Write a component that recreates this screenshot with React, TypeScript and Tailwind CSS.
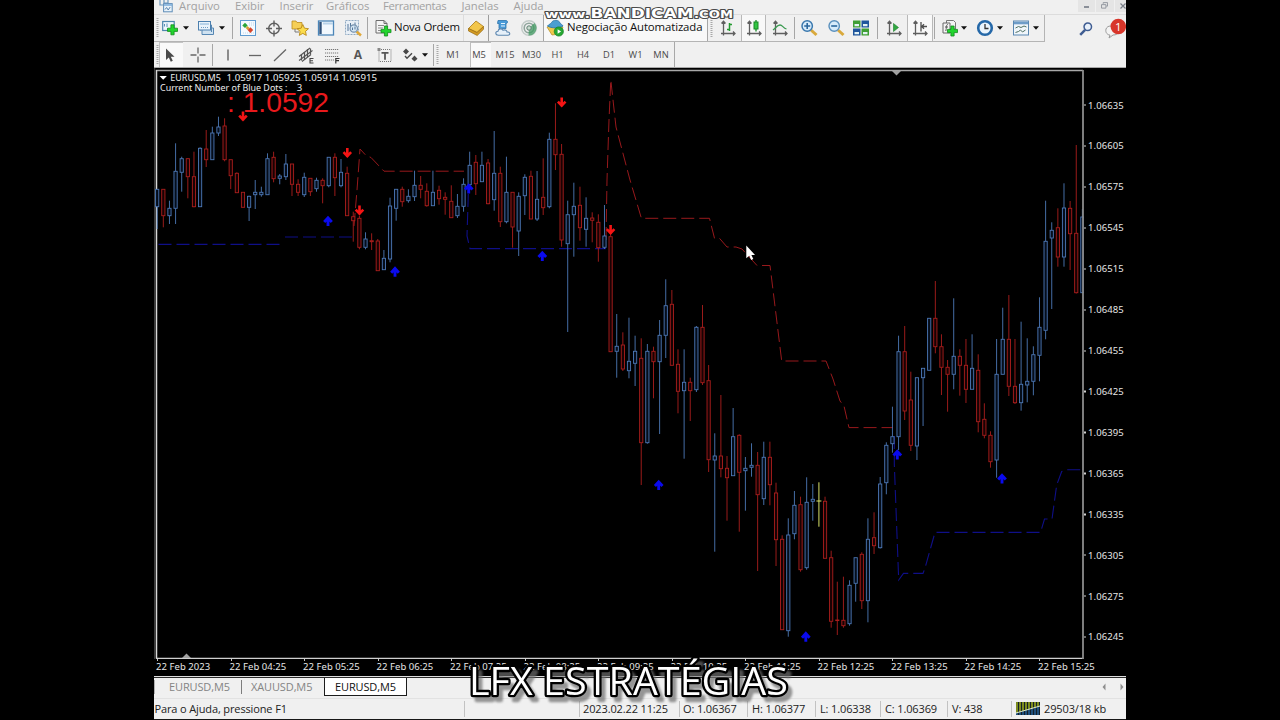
import type { ReactNode } from 'react';

type Candle = [kind: 'b' | 'r' | 'y', high: number, top: number, bottom: number, low: number];

const candles: Candle[] = [
  ['b', 189, 189.3, 206.7, 229], ['r', 189, 189.3, 215.7, 227.3], ['b', 200.7, 208.3, 215.7, 224],
  ['b', 143.3, 171.3, 208.3, 224], ['b', 156.7, 158.7, 172.3, 191.7], ['r', 158, 158.7, 176.7, 198.3],
  ['r', 151.7, 176.7, 206.7, 207.3], ['b', 147.3, 148.3, 206.7, 206.7], ['r', 130, 149, 159.7, 167],
  ['b', 126.7, 133, 159.7, 159.7], ['b', 116.7, 127, 133, 136], ['r', 118.3, 126, 159.7, 161.3],
  ['r', 159.7, 159.7, 175.7, 189], ['r', 172.3, 173.3, 192.7, 192.7], ['r', 192.3, 192.3, 207.3, 207.3],
  ['b', 195.7, 196.3, 207.3, 221], ['b', 180, 192.3, 194.7, 209], ['b', 186.7, 192.3, 194.7, 196.7],
  ['b', 153.3, 158.7, 194.7, 194.7], ['r', 151.7, 157.3, 178.7, 182.3], ['b', 174, 176, 178.3, 184.3],
  ['b', 154, 164, 176.7, 180], ['r', 164, 164, 184.3, 196], ['r', 179.3, 184.3, 192.3, 196],
  ['b', 172.7, 177.3, 194.7, 197], ['r', 178.3, 178.3, 191.7, 196], ['b', 177.7, 180.3, 188.7, 191.7],
  ['r', 178.3, 180.3, 185.7, 203.3], ['b', 157.3, 157.3, 185.7, 187.3], ['r', 153.3, 157.3, 177.7, 196],
  ['b', 159, 172.3, 185.7, 187.3], ['r', 166.7, 173.3, 215.7, 215.7], ['r', 211.7, 216.7, 220.7, 241.7],
  ['r', 215.7, 218.3, 247.3, 249.3], ['b', 232.3, 239, 247.3, 249.3], ['r', 233.3, 240.7, 241.7, 250],
  ['r', 239, 241, 270.7, 270.7], ['b', 250, 258.3, 269.7, 269.7], ['b', 197.7, 206, 259, 262.3],
  ['b', 189.3, 189.3, 208.3, 220.7], ['r', 186.7, 189.3, 201.7, 206.7], ['b', 189.3, 196.3, 200.7, 202.7],
  ['b', 170.7, 185.3, 196.7, 201], ['r', 176, 185.3, 189.3, 198.3], ['r', 183.3, 191.3, 205.7, 206.7],
  ['b', 170.7, 192.3, 205.7, 205.7], ['r', 185.7, 190.3, 198.7, 204.7], ['r', 192.3, 197.3, 199.3, 214.7],
  ['r', 185.3, 201.3, 217.7, 217.7], ['b', 194, 206.3, 215.7, 218], ['b', 178.3, 184.3, 206.3, 211.7],
  ['b', 151.7, 165.3, 184.7, 190], ['r', 155, 162.3, 183.7, 195], ['b', 151.7, 165.3, 181.7, 181.7],
  ['r', 159, 163, 203.7, 204.3], ['b', 131, 173.3, 199.7, 210.7], ['r', 166.7, 173.3, 221.7, 227],
  ['b', 156.7, 192.3, 221.7, 223.3], ['r', 192.3, 192.3, 227, 247.7], ['b', 192.3, 196.3, 231, 256],
  ['b', 174.3, 177.3, 195.7, 215], ['r', 170.7, 176.3, 219, 219], ['b', 171, 199.3, 219, 221],
  ['r', 158.3, 197.3, 207.7, 215], ['b', 132.7, 139.3, 206.7, 208.3], ['r', 103.3, 139.3, 154.7, 170],
  ['r', 144, 154.3, 240, 246.7], ['b', 200.7, 214.7, 243.7, 332], ['b', 182.7, 206.3, 214.7, 256.7],
  ['r', 186.7, 205.3, 227.7, 240.7], ['b', 197.3, 218.3, 229.3, 246.7], ['r', 212.3, 218, 220.3, 242.3],
  ['r', 214.3, 222.3, 247.7, 261.7], ['b', 205, 236, 247.3, 249], ['r', 230, 236.7, 351.7, 351.7],
  ['b', 314, 346.3, 351.3, 377.7], ['r', 332.3, 345, 369, 371], ['b', 317.7, 361.3, 370.7, 378.3],
  ['b', 335.7, 351.3, 363.3, 386], ['r', 338.3, 358.3, 442.7, 485], ['b', 344, 351.3, 442.7, 443.7],
  ['r', 346.7, 351.3, 361.7, 398.3], ['b', 320, 335.3, 361.7, 434], ['b', 279.3, 305.7, 335.3, 358],
  ['r', 290, 304.3, 365.3, 365.3], ['r', 349.3, 364.3, 391.3, 413.3], ['b', 349.3, 382.3, 390.7, 458.7],
  ['r', 377.7, 382.3, 390.7, 421], ['b', 326, 327.3, 389.7, 392], ['r', 305, 327.3, 382.7, 385],
  ['r', 365, 380.7, 459.7, 472], ['b', 433.3, 456, 460, 551.7], ['r', 395, 456, 468.7, 477.3],
  ['r', 456, 468.3, 477.7, 520.7], ['b', 408, 436.7, 475.7, 475.7], ['r', 434.3, 435.3, 472.3, 531.7],
  ['b', 457, 468.3, 470.7, 510.7], ['b', 443.3, 465.3, 467.3, 476.7], ['r', 452, 465.3, 494.7, 571],
  ['b', 441.7, 457.3, 498.7, 505], ['r', 441.7, 457.3, 484.7, 505.3], ['r', 482.7, 493, 539.7, 566],
  ['r', 535.3, 539.3, 629.7, 629.7], ['b', 518.3, 535, 630.7, 636.7], ['b', 491, 505.3, 533.7, 539.3],
  ['r', 496.7, 504.7, 569.7, 571.7], ['b', 477.3, 502.3, 567.7, 569.7], ['b', 484, 499.3, 501.3, 520.7],
  ['y', 482.3, 501, 501, 526.7], ['r', 496.7, 501.3, 558.3, 558.3], ['r', 550.7, 557.7, 621.3, 627.7],
  ['r', 581.7, 620, 620.6, 635], ['r', 576.7, 620.3, 625.7, 627.7], ['b', 580.3, 585.3, 623.7, 625.7],
  ['b', 557.7, 557.7, 583.3, 601.7], ['r', 552.3, 554.3, 600.7, 609], ['b', 518.3, 539.3, 600.7, 622.3],
  ['r', 512.3, 537.7, 545.7, 554], ['b', 477, 484, 547.7, 548.5], ['b', 442.3, 445.3, 482.7, 494.3],
  ['b', 406.7, 436.7, 443.7, 452.7], ['b', 335.7, 351.7, 436.7, 450], ['r', 326, 351.7, 411, 420],
  ['r', 371.7, 400, 445.3, 451], ['b', 377.7, 377.7, 446, 460], ['b', 368.3, 368.3, 377.7, 426],
  ['b', 318.3, 318.3, 370.3, 370.3], ['r', 281, 318.3, 346.7, 353.3], ['r', 334.3, 346.7, 367.3, 395],
  ['r', 360, 367.3, 374.3, 411.7], ['b', 298.3, 356.3, 374.3, 389.3], ['r', 349.3, 356.3, 365.3, 395.7],
  ['r', 339, 365.3, 389.3, 403], ['b', 334.3, 368.3, 389.3, 389.3], ['r', 354.3, 370.3, 421.7, 432.3],
  ['r', 403.3, 419.3, 435.3, 438.3], ['r', 431.3, 435.3, 461.7, 467.7], ['b', 339, 374.3, 460, 477.7],
  ['b', 307.7, 339.3, 374.3, 374.3], ['r', 295, 339.3, 386.3, 396], ['r', 339, 386.3, 402.7, 404],
  ['b', 321.7, 384.3, 402.7, 410.7], ['b', 338.3, 381.3, 385, 402.3], ['b', 346.3, 354.7, 381.3, 395.3],
  ['b', 297.3, 327.3, 355.3, 381.3], ['b', 200.7, 241.3, 330.3, 339.3], ['b', 222.3, 230.3, 238, 309],
  ['r', 208.3, 227.7, 257, 266.7], ['b', 183.3, 208, 257, 266.7], ['r', 201, 208.3, 233.7, 270],
  ['r', 145, 233.3, 292.7, 293.5], ['b', 209, 217, 292.7, 292.7],
];

const strokes = { b: '#4d79b8', r: '#ac1e1d', y: '#d9e36a' };
const fills = { b: '#050d1a', r: '#180203', y: 'none' };

const downArrows = [[243, 116.5], [347.3, 153], [359.5, 210.5], [561.7, 102.5], [610.6, 230]];
const upArrows = [[328, 221], [395, 271.7], [468.7, 188.5], [542.3, 256], [658.7, 485], [805.8, 636.7], [897.3, 454.5], [1002, 478.5]];

const redStops = [
  'M354 226 L357 190 L360 149 L366 155.5 L371 157.5 L384 171.2 H464',
  'M606 240 L607 180 L609 120 L610.8 80 L616 127 L630 180 L641.4 218.3 H709.5 L714.5 238.3 H719.5 L727 247 H736 L742 249 L757 265.5 H770 L781.7 361 H826 L833 379 L840 401 L844 406 L849 427.6 H893',
];
const blueStops = [
  'M158.5 244.4 H281',
  'M285 237 H353',
  'M468.3 194 L467 236 L470 248.6 H606',
  'M894.3 436 V464 L898.7 580 L903.5 573.4 H923 L925 568 L935 532.4 H1040.5 L1044.5 519 H1052 L1056.7 485 L1061.7 471.5 L1067 469.7 H1083',
];

const prices = ['1.06635', '1.06605', '1.06575', '1.06545', '1.06515', '1.06485', '1.06455', '1.06425', '1.06395', '1.06365', '1.06335', '1.06305', '1.06275', '1.06245'];
const times = ['22 Feb 2023', '22 Feb 04:25', '22 Feb 05:25', '22 Feb 06:25', '22 Feb 07:25', '22 Feb 08:25', '22 Feb 09:25', '22 Feb 10:25', '22 Feb 11:25', '22 Feb 12:25', '22 Feb 13:25', '22 Feb 14:25', '22 Feb 15:25'];

const CHART_FONT = "'Noto Sans','Open Sans',sans-serif";

function Chart() {
  return (
    <svg className="block h-[591px] w-[930px] shrink-0" viewBox="154 68 930 591">
      <path d="M154.7 68V659" stroke="#4a4a4a" strokeWidth="1" />
      <path d="M156.5 659V70.5H1083" fill="none" stroke="#a8a8a8" strokeWidth="1.3" />
      <path d="M156.5 70V658" stroke="#d8d8d8" strokeWidth="1.3" />
      <path d="M156 658.3H1083.5" stroke="#cfcfcf" strokeWidth="1.2" />
      {redStops.map((d) => (
        <path key={d} d={d} fill="none" stroke="#98191c" strokeWidth="1" strokeDasharray="13 5" />
      ))}
      {blueStops.map((d) => (
        <path key={d} d={d} fill="none" stroke="#0f0f88" strokeWidth="1.1" strokeDasharray="13 5" />
      ))}
      {candles.map(([kind, high, top, bottom, low], i) => {
        const x = 157.2 + i * 6.127;
        const h = Math.max(bottom - top, 0.4);
        return (
          <g key={i} stroke={strokes[kind]} strokeWidth={kind === 'y' ? 1 : 0.9}>
            <path d={`M${x} ${high}V${top}M${x} ${bottom}V${low}`} />
            {kind === 'y' ? (
              <path d={`M${x - 2.5} ${top}h5`} />
            ) : (
              <rect x={x - 1.6} y={top} width="3.2" height={h} fill={fills[kind]} />
            )}
          </g>
        );
      })}
      {downArrows.map(([x, y]) => (
        <path key={x} d={`M${x} ${y - 5}V${y + 4}M${x - 3.8} ${y - 0.8}L${x} ${y + 3.2}L${x + 3.8} ${y - 0.8}`} fill="none" stroke="#f51414" strokeWidth="2.6" />
      ))}
      {upArrows.map(([x, y]) => (
        <path key={x} d={`M${x} ${y + 5}V${y - 3}M${x - 3.8} ${y + 1}L${x} ${y - 3.2}L${x + 3.8} ${y + 1}`} fill="none" stroke="#0a0aee" strokeWidth="2.9" />
      ))}
      <path d="M1083 70V659" stroke="#8c8c8c" strokeWidth="1.8" />
      <path d="M892 71h9l-4.5 4.5z" fill="#a0a0a0" />
      <path d="M182 658h9l-4.5-4.5z" fill="#a0a0a0" />
      <text x="227" y="111.6" fontFamily="'Liberation Sans',sans-serif" fontSize="28.5" fill="#e8191c" textLength="102" lengthAdjust="spacingAndGlyphs">: 1.0592</text>
      <path d="M159.5 76h7.4l-3.7 3.8z" fill="#fff" />
      <g fill="#ececec" fontFamily={CHART_FONT} fontSize="9.6">
        <text x="170.3" y="81" textLength="50.5" lengthAdjust="spacingAndGlyphs">EURUSD,M5</text>
        <text x="226.6" y="81" textLength="150.5" lengthAdjust="spacingAndGlyphs">1.05917 1.05925 1.05914 1.05915</text>
        <text x="160" y="91.2" textLength="127.5" lengthAdjust="spacingAndGlyphs">Current Number of Blue Dots :</text>
        <text x="296.8" y="91.2">3</text>
      </g>
      <path d="M746.3 245.5V258.3L749.2 255.7L751.2 260L753.3 259L751.4 254.900H755z" fill="#fff" />
    </svg>
  );
}

function Cell({ className, children }: { className: string; children?: ReactNode }) {
  return <div className={`flex h-full shrink-0 items-center justify-center ${className}`}>{children}</div>;
}

function Pic({ children, className = 'h-[18px] w-[18px]' }: { children: ReactNode; className?: string }) {
  return (
    <svg viewBox="0 0 18 18" className={`shrink-0 ${className}`} fill="none">
      {children}
    </svg>
  );
}

function Caret({ className }: { className: string }) {
  return (
    <Cell className={className}>
      <svg viewBox="0 0 6 4" className="h-[4px] w-[6px]"><path d="M0 0.3h6L3 3.7z" fill="#111" /></svg>
    </Cell>
  );
}

function Sep({ className }: { className: string }) {
  return <div className={`h-[22px] w-px shrink-0 bg-[#a6a6a6] ${className}`} />;
}

function Grip() {
  return (
    <Cell className="w-[6px]">
      <svg viewBox="0 0 3 20" className="h-[20px] w-[3px]"><path d="M1.5 0V20" stroke="#a8a8a8" strokeWidth="2" strokeDasharray="1 1" /></svg>
    </Cell>
  );
}

const Plus = ({ x, y }: { x: number; y: number }) => (
  <path d={`M${x - 1.6} ${y - 5}h3.2v3.4h3.4v3.2h-3.4v3.4h-3.2v-3.4h-3.4v-3.2h3.4z`} fill="#22d52e" stroke="#128a1c" strokeWidth="0.8" />
);

const Axes = () => (
  <path d="M4.500 2.500V14.500H16M2.500 4.500L4.500 2.200l2 2.300M14 12.500l2 2-2 2M2 14.500h2.500v2" stroke="#5f5f5f" strokeWidth="1.300" />
);

function MenuBar() {
  return (
    <div className="flex h-[15px] shrink-0 overflow-hidden border-b border-[#dcdcdc] text-[11.3px] leading-[11px] text-[#a2a2a2]">
      <div className="w-[25px] shrink-0 pl-[5px]">
        <svg viewBox="0 0 14 13" className="h-[13px] w-[14px]" fill="none">
          <path d="M1 0V5H5M5 0V3H9V0" stroke="#6b97bd" strokeWidth="1.2" />
          <rect x="4.6" y="3.6" width="8.6" height="8.2" fill="#e8f2fa" stroke="#5f8db8" />
          <path d="M5 5h8" stroke="#7fb0dc" strokeWidth="1.6" />
          <path d="M6 9.5l1.6-2 1.6 2.5 2-3" stroke="#5c86b0" />
        </svg>
      </div>
      <div className="w-[56px] shrink-0">Arquivo</div>
      <div className="w-[44.5px] shrink-0">Exibir</div>
      <div className="w-[46.5px] shrink-0">Inserir</div>
      <div className="w-[57px] shrink-0">Gráficos</div>
      <div className="w-[78.5px] shrink-0 tracking-[-0.4px]"><span className="tracking-[-0.350px]">Ferramentas</span></div>
      <div className="w-[52px] shrink-0">Janelas</div>
      <div className="w-[60px] shrink-0">Ajuda</div>
      <div className="ml-auto flex h-[12px] gap-px">
        <div className="w-[17px] bg-[#e5e5e5] pt-[6px] pl-[6px]"><div className="h-[1.5px] w-[5px] bg-[#8a8f98]" /></div>
        <div className="w-[18px] bg-[#e5e5e5] pt-[2px] pl-[5px]">
          <svg viewBox="0 0 8 8" className="h-[7px] w-[7px]" fill="none" stroke="#8a8f98"><path d="M2.5 2V.7h5v4H6M.6 3h5v4h-5z" /></svg>
        </div>
        <div className="w-[11px] bg-[#e5e5e5] pt-[3px] pl-[5px]">
          <svg viewBox="0 0 6 6" className="h-[6px] w-[6px]" stroke="#7a7f88" strokeWidth="1.2"><path d="M.5.5l5 5M5.500.5l-5 5" /></svg>
        </div>
      </div>
    </div>
  );
}

function MainToolbar() {
  return (
    <div className="flex h-[27px] w-full shrink-0 items-center overflow-hidden text-[11.4px] text-[#111]">
      <div className="flex h-full w-[891px] shrink-0 items-center border-r border-b border-[#b4b4b4]">
        <Grip />
        <Cell className="w-[22px] pr-[2px]">
          <Pic>
            <rect x="1.700" y="2.500" width="11.500" height="9" fill="#eef6fc" stroke="#4c86ad" strokeWidth="1.200" />
            <path d="M3.500 7.500V5M6 8V4.500" stroke="#5a8fb5" />
            <Plus x={11.500} y={10.800} />
          </Pic>
        </Cell>
        <Caret className="w-[8px]" />
        <Cell className="ml-[4px] w-[24px]">
          <Pic>
            <path d="M5 9h11.500v6.500H5z" fill="#cfe2f1" stroke="#5687b3" />
            <path d="M3.500 11.500V6h11v7" stroke="#5687b3" />
            <rect x="1.500" y="2.500" width="12" height="8.500" fill="#e9f3fb" stroke="#4c7fae" />
            <path d="M3 5h9" stroke="#86b2d8" />
            <path d="M4 8.500h7" stroke="#6f9cc4" strokeDasharray="1 1" />
          </Pic>
        </Cell>
        <Caret className="w-[8px]" />
        <Sep className="ml-[6px]" />
        <Cell className="w-[29px]">
          <Pic>
            <rect x="1.500" y="1.500" width="15" height="15" fill="#f5faff" stroke="#5f9bd0" />
            <path d="M10 4h5M10 6h5M4 14h5M10 14h5" stroke="#bfd6ea" strokeDasharray="1 1" />
            <path d="M6 3.700l2.700 2.700L6 9.100 3.300 6.400z" fill="#2aa53a" />
            <path d="M8.500 7L10.500 9l-2 2L6.800 9z" fill="#d8a030" />
            <path d="M11.400 8.300l2.800 2.800-2.800 2.800-2.800-2.800z" fill="#d8452a" />
          </Pic>
        </Cell>
        <Cell className="w-[24px]">
          <Pic>
            <circle cx="9" cy="9.500" r="5.300" stroke="#5e5e5e" strokeWidth="1.400" />
            <path d="M9 1.500V7.500M9 11.500V17.500M1 9.500H7M11 9.500H17" stroke="#5e5e5e" strokeWidth="1.400" />
          </Pic>
        </Cell>
        <Cell className="w-[27px]">
          <Pic>
            <path d="M1 2h4l1 1.500h5V10H1z" fill="#f6cf55" stroke="#b98a1e" strokeWidth="0.800" />
            <path d="M4 10v3h4" stroke="#7a7a7a" />
            <path d="M11.800 5.500l1.700 3.700 4 .5-3 2.700.8 4-3.500-2-3.500 2 .8-4-3-2.700 4-.5z" fill="#fbdc4c" stroke="#b98818" strokeWidth="0.900" />
          </Pic>
        </Cell>
        <Cell className="w-[25px]">
          <Pic>
            <rect x="1.500" y="2" width="15" height="14" fill="#f2f8fd" stroke="#4c86b8" strokeWidth="1.300" />
            <path d="M3.500 3v12" stroke="#2e4f78" strokeWidth="2.400" />
            <path d="M6 4.500h10" stroke="#b9d3e8" strokeWidth="2" />
          </Pic>
        </Cell>
        <Cell className="w-[29px]">
          <Pic>
            <rect x="1.500" y="1.500" width="13" height="14" fill="#e8eff6" stroke="#8fa9c2" strokeDasharray="2 1" />
            <path d="M4 12V5M6.500 8V4M11 6V3.500" stroke="#54779b" />
            <path d="M12.500 12.500l4.500 4" stroke="#e0a83a" strokeWidth="2.400" />
            <circle cx="9.800" cy="9.500" r="3.700" fill="#d5e7f5" stroke="#7591ad" strokeWidth="1.200" />
            <path d="M8.500 11V8.500M11 10.500V7.500" stroke="#54779b" />
          </Pic>
        </Cell>
        <Sep className="" />
        <Cell className="ml-[5px] w-[20px]">
          <Pic>
            <path d="M2 1.500h8l3 3V14H2z" fill="#f4f4f4" stroke="#6d6d6d" />
            <path d="M10 1.500v3h3" stroke="#6d6d6d" />
            <path d="M4 6.500h6M4 9h5M4 11.500h3" stroke="#8a8a8a" />
            <Plus x={12} y={12} />
          </Pic>
        </Cell>
        <Cell className="ml-px w-[67px] justify-start whitespace-nowrap"><span className="-translate-y-px tracking-[-0.200px]">Nova Ordem</span></Cell>
        <Cell className="ml-[2px] w-[26px] border-r border-l border-r-[#9c9c9c] border-l-[#dcdcdc]">
          <Pic>
            <path d="M1.500 9.500L9 2l7.500 5.500L10 13.500z" fill="#f3c64a" stroke="#a97a16" strokeWidth="0.800" />
            <path d="M1.500 9.500L10 13.500l6.500-6v2.800L10.200 16.500 1.500 12z" fill="#d39a22" stroke="#966a10" strokeWidth="0.700" />
          </Pic>
        </Cell>
        <Cell className="w-[27px]">
          <Pic>
            <path d="M4 1.500h8c2 0 2 3 0 3v5H5v-5H3.500z" fill="#4a9bd8" stroke="#2d74ab" strokeWidth="0.800" />
            <path d="M7 4.500h4M7 7h4" stroke="#e6f3fc" strokeWidth="1.200" />
            <path d="M4.500 16.200c-3.500 0-3.500-4-.5-4 .3-2.800 4-3 5-1 2.500-1 4 .3 4 1.800 3.500-.3 3.500 3.200 1 3.200z" fill="#e6f0f9" stroke="#5d87b0" strokeWidth="1.100" />
          </Pic>
        </Cell>
        <Cell className="w-[25px]">
          <Pic>
            <circle cx="9" cy="9" r="7.300" stroke="#c3ccc9" strokeWidth="1.500" />
            <circle cx="9" cy="9" r="4.800" stroke="#8fa59c" strokeWidth="1.600" />
            <path d="M9 9L8.500 16.500A7.500 7.500 0 0 0 14.500 4z" fill="#3f9a60" opacity="0.750" />
            <circle cx="9" cy="9" r="2.200" fill="#c9dccf" stroke="#5f7f72" />
          </Pic>
        </Cell>
        <Cell className="ml-[2px] w-[165px] justify-start border-r border-l border-[#a6a6a6] bg-[#f8f8f8] pl-[2px] whitespace-nowrap">
          <Pic>
            <path d="M1 8l8-3 8 3-3 7-8 1z" fill="#f0c84c" stroke="#b18a20" strokeWidth="0.700" />
            <path d="M1.500 7C3 5 5 5 5.500 3.500 7 .5 13 .5 14 4c1 1.500 2.500 1.500 3 3-3 2.500-12 2.500-15.500 0z" fill="#4b9ed2" stroke="#2c74a6" strokeWidth="0.800" />
            <circle cx="12.800" cy="12.500" r="4.600" fill="#27a833" stroke="#128020" strokeWidth="0.700" />
            <path d="M11.600 10.200l3.500 2.300-3.500 2.300z" fill="#fff" />
          </Pic>
          <span className="ml-[3px] -translate-y-px tracking-[-0.120px]">Negociação Automatizada</span>
        </Cell>
        <Grip />
        <Cell className="ml-[2px] w-[24px]">
          <Pic>
            <Axes />
            <path d="M10.500 4v8M10.500 5.500h2.500M8 10.500h2.500" stroke="#249a30" strokeWidth="1.500" />
          </Pic>
        </Cell>
        <Cell className="ml-px w-[25px] border-r border-l border-[#b8b8b8] bg-[#f8f8f8]">
          <Pic>
            <Axes />
            <path d="M11 1v11.500" stroke="#178a25" strokeWidth="1.300" />
            <rect x="9" y="3" width="4" height="7" fill="#32c542" stroke="#178a25" />
          </Pic>
        </Cell>
        <Cell className="ml-px w-[26px]">
          <Pic>
            <Axes />
            <path d="M2 11C5 9 6 6 9 6c2.500 0 3 3 6.500 4" stroke="#3a9a50" strokeWidth="1.300" />
          </Pic>
        </Cell>
        <Sep className="ml-px" />
        <Cell className="w-[28px]">
          <Pic>
            <path d="M11 11l5.500 5" stroke="#d9a93c" strokeWidth="3" />
            <circle cx="7.200" cy="7" r="5.200" fill="#d7ebfa" stroke="#3a78ae" strokeWidth="1.500" />
            <path d="M7.200 4v6M4.200 7h6" stroke="#2a679e" strokeWidth="1.600" />
          </Pic>
        </Cell>
        <Cell className="w-[25px]">
          <Pic>
            <path d="M11 11l5.500 5" stroke="#d9a93c" strokeWidth="3" />
            <circle cx="7.200" cy="7" r="5.200" fill="#d7ebfa" stroke="#5a90bd" strokeWidth="1.400" />
            <path d="M4.200 7h6" stroke="#2a679e" strokeWidth="1.600" />
          </Pic>
        </Cell>
        <Cell className="w-[26px]">
          <Pic>
            <rect x="1" y="1.500" width="7.500" height="7" fill="#3f9f35" />
            <rect x="9.500" y="1.500" width="7.500" height="7" fill="#1f559c" />
            <rect x="1" y="9.500" width="7.500" height="7" fill="#1f559c" />
            <rect x="9.500" y="9.500" width="7.500" height="7" fill="#3f9f35" />
            <path d="M2.500 6.200h4.500M11 6.200h4.500M2.500 14.200h4.500M11 14.200h4.500" stroke="#e3f2f4" strokeWidth="2.200" />
          </Pic>
        </Cell>
        <Sep className="ml-[3px]" />
        <Cell className="ml-[2px] w-[27px]">
          <Pic>
            <Axes />
            <path d="M8.500 4.500l5 4-5 4z" fill="#2fa840" stroke="#1d7c2a" strokeWidth="0.600" />
          </Pic>
        </Cell>
        <Cell className="w-[26px] border-r border-l border-[#b8b8b8] bg-[#f8f8f8]">
          <Pic>
            <Axes />
            <path d="M10 3v9.500M16 7.500h-5M13 5.200L10.700 7.500 13 9.800" stroke="#4d4d4d" strokeWidth="1.300" />
          </Pic>
        </Cell>
        <Sep className="ml-px" />
        <Cell className="ml-[5px] w-[19px]">
          <Pic>
            <path d="M5.500 1.500h7l2 2V10h-9z" fill="#f4f4f4" stroke="#777" />
            <path d="M2 4h7v10H2z" fill="#f4f4f4" stroke="#666" />
            <path d="M6.800 5.500c-2 0-1 3-2 6.500M4 8h3" stroke="#555" />
            <Plus x={11.500} y={12} />
          </Pic>
        </Cell>
        <Caret className="w-[9px]" />
        <Cell className="ml-[7px] w-[20px]">
          <Pic>
            <circle cx="9" cy="9" r="6.800" fill="#eaf4fc" stroke="#2568a8" strokeWidth="2.600" />
            <path d="M9 5v4.500h3.500" stroke="#333" strokeWidth="1.300" />
          </Pic>
        </Cell>
        <Caret className="w-[9px]" />
        <Cell className="ml-[7px] w-[20px]">
          <Pic>
            <rect x="1.500" y="2" width="15" height="14" fill="#f0f6fb" stroke="#5a88b2" />
            <path d="M2 4h14" stroke="#6d9cc8" strokeWidth="2.600" />
            <path d="M3.500 9l3-1.500 2.500 1 3-1.500 2.500 1M3.500 13.500l3-1 2-1.500 2 2 3-2" stroke="#4f7062" />
          </Pic>
        </Cell>
        <Caret className="w-[9px]" />
      </div>
      <Cell className="ml-[33px] w-[16px]">
        <Pic className="h-[16px] w-[16px]">
          <path d="M8 10L2.500 15.500" stroke="#3f5d92" strokeWidth="2.800" />
          <circle cx="11" cy="6.500" r="4.200" fill="#e8f0fa" stroke="#3f5d92" strokeWidth="1.700" />
        </Pic>
      </Cell>
      <Cell className="ml-[8px] w-[24px]">
        <svg viewBox="0 0 24 27" className="h-[27px] w-[24px]">
          <path d="M4 14c-1 4 2 6 4 6l-1 3 4-3c3 0 5-1 6-3L9 11c-3 0-4 1-5 3z" fill="#f3f3f3" stroke="#9a9a9a" />
          <circle cx="16.300" cy="11.500" r="7.800" fill="#d8352a" />
          <text x="16.300" y="15.700" textAnchor="middle" fontFamily="'Open Sans',sans-serif" fontSize="11.500" fill="#fff">1</text>
        </svg>
      </Cell>
    </div>
  );
}

function DrawToolbar() {
  return (
    <div className="flex h-[25px] shrink-0 items-center overflow-hidden text-[9.3px] text-[#4a4a4a]">
      <div className="flex h-full w-[521px] shrink-0 items-center border-r border-[#a8a8a8] text-[#4a4a4a]">
        <div className="-mr-px h-full"><Grip /></div>
        <Cell className="w-[24px] border-t border-l border-[#c4c4c4] bg-[#f9f9f9] pr-[3px]">
          <Pic><path d="M5 2.500V14l2.800-2.500 2 4.300 2-1-2-4.100h3.700z" fill="#4a4a4a" /></Pic>
        </Cell>
        <Cell className="w-[29px]">
          <Pic><path d="M9 1.500V7.500M9 10.500V16.500M1.500 9H7.500M10.500 9H16.500" stroke="#666" strokeWidth="1.300" /></Pic>
        </Cell>
        <Sep className="" />
        <Cell className="w-[30px]"><Pic><path d="M9 3.500V14.500" stroke="#555" strokeWidth="1.300" /></Pic></Cell>
        <Cell className="w-[24px]"><Pic><path d="M3 9.500H15" stroke="#666" strokeWidth="1.300" /></Pic></Cell>
        <Cell className="w-[26px]"><Pic><path d="M3 15L15 3.500" stroke="#666" strokeWidth="1.300" /></Pic></Cell>
        <Cell className="w-[26px]">
          <Pic>
            <path d="M2 10.500L13 2M2 14.500L15.500 4.500M5 15.500L14 8.500" stroke="#555" strokeWidth="1.100" />
            <path d="M4.500 8.500v6M7.500 6v7.500M10.500 3v8M13.500 2.500v6" stroke="#555" strokeWidth="1.200" />
            <path d="M16.500 12.500h-3.500v4.500h3.500M13 14.700h3" stroke="#444" strokeWidth="1.100" />
          </Pic>
        </Cell>
        <Cell className="w-[26px]">
          <Pic>
            <path d="M2 3.500H16M2 7H16M2 10.500H16M2 14H11" stroke="#777" strokeWidth="1.200" strokeDasharray="1.200 0.800" />
            <path d="M16.500 12.500h-3.700v5M12.800 14.700h3.200" stroke="#333" strokeWidth="1.200" />
          </Pic>
        </Cell>
        <Cell className="w-[26px] text-[12px] font-bold text-[#555]"><span>A</span></Cell>
        <Cell className="w-[27px]">
          <Pic>
            <rect x="3" y="3.500" width="12" height="12" stroke="#777" strokeDasharray="1 1" />
            <path d="M1.500 2h3v3h-3z" fill="#888" />
            <path d="M5.500 6.800h7M9 6.800v7" stroke="#555" strokeWidth="1.800" />
          </Pic>
        </Cell>
        <Cell className="w-[24px]">
          <Pic>
            <path d="M5 2.500l3 3-3 3-3-3zM13.500 9.500l3 3.200-3 2.800-3-2.800z" fill="#484848" />
            <path d="M4 10l2 2.300 5-5" stroke="#484848" strokeWidth="1.400" />
          </Pic>
        </Cell>
        <Caret className="w-[6px]" />
        <Sep className="ml-[5px]" />
        <Grip />
        <Cell className="w-[30px] pr-[4px]">M1</Cell>
        <Cell className="w-[21px] border-t border-l border-[#bdbdbd] bg-[#f9f9f9] pr-[4px]">M5</Cell>
        <Cell className="w-[28px]">M15</Cell>
        <Cell className="w-[25px]">M30</Cell>
        <Cell className="w-[27px]">H1</Cell>
        <Cell className="w-[24px]">H4</Cell>
        <Cell className="w-[28px]">D1</Cell>
        <Cell className="w-[25px]">W1</Cell>
        <Cell className="w-[26px]">MN</Cell>
      </div>
    </div>
  );
}

function Tabs() {
  return (
    <div className="flex h-[21px] shrink-0 items-start border-t border-[#2a2a2a] text-[11px] leading-[18px] text-[#848484]">
      <div className="mt-[2px] h-[14px] w-px bg-[#b0b0b0]" />
      <div className="w-[86px] pl-[14px] tracking-[-0.12px]">EURUSD,M5</div>
      <div className="mt-[2px] h-[14px] w-px bg-[#7d7d7d]" />
      <div className="w-[82px] pl-[9px] tracking-[-0.12px]">XAUUSD,M5</div>
      <div className="h-[18px] w-[83px] border-r border-b border-l border-[#1c1c1c] bg-white pl-[10px] tracking-[-0.12px] text-[#111]">EURUSD,M5</div>
      <svg viewBox="0 0 22 8" className="mt-[5px] ml-auto h-[8px] w-[25px]"><path d="M3 0.500v7L0 4zM18 0.500v7L21 4z" fill="#8f8f8f" /></svg>
    </div>
  );
}

function StatusBar() {
  return (
    <div className="flex h-[21px] shrink-0 border-t border-[#e2e2e2] text-[11px] leading-[20px] tracking-[-0.130px] whitespace-nowrap text-[#222]">
      <div className="w-[310px] shrink-0 pl-[0.500px]">Para o Ajuda, pressione F1</div>
      <div className="my-[2px] w-px shrink-0 bg-[#c2c2c2]" />
      <div className="w-[114px] shrink-0" />
      <div className="my-[2px] w-px shrink-0 bg-[#c2c2c2]" />
      <div className="w-[99px] shrink-0 pl-[3px]">2023.02.22 11:25</div>
      <div className="my-[2px] w-px shrink-0 bg-[#c2c2c2]" />
      <div className="w-[67px] shrink-0 pl-[3px]">O: 1.06367</div>
      <div className="my-[2px] w-px shrink-0 bg-[#c2c2c2]" />
      <div className="w-[67px] shrink-0 pl-[4px]">H: 1.06377</div>
      <div className="my-[2px] w-px shrink-0 bg-[#c2c2c2]" />
      <div className="w-[64px] shrink-0 pl-[4px]">L: 1.06338</div>
      <div className="my-[2px] w-px shrink-0 bg-[#c2c2c2]" />
      <div className="w-[66px] shrink-0 pl-[4px]">C: 1.06369</div>
      <div className="my-[2px] w-px shrink-0 bg-[#c2c2c2]" />
      <div className="w-[63px] shrink-0 pl-[4px]">V: 438</div>
      <div className="my-[2px] w-px shrink-0 bg-[#c2c2c2]" />
      <svg viewBox="0 0 24 13" className="mt-[3px] ml-[4px] h-[13px] w-[24px] shrink-0">
        <path d="M0 0H24V6L0 12z" fill="#7d8c1f" />
        <path d="M24 4V13H0V11z" fill="#1f4f7c" />
        <path d="M2.500 0V13M5.500 0V13M8.500 0V13M11.500 0V13M14.500 0V13M17.500 0V13M20.500 0V13M23.500 0V13" stroke="#14202a" strokeWidth="1" />
        <path d="M0 11L24 4" stroke="#dfe8c8" strokeWidth="1" />
      </svg>
      <div className="shrink-0 pl-[4px]">29503/18 kb</div>
    </div>
  );
}

export default function App() {
  return (
    <div className="relative flex h-[720px] w-[1280px] overflow-hidden bg-black pl-[154px] font-['Open_Sans','Noto_Sans',sans-serif]">
      <div className="flex h-[720px] w-[972px] shrink-0 flex-col bg-[#f0f0f0]">
        <MenuBar />
        <MainToolbar />
        <DrawToolbar />
        <div className="h-px shrink-0 bg-[#a8a8a8]" />
        <div className="flex h-[608px] shrink-0 flex-col bg-black font-['Noto_Sans','Open_Sans',sans-serif] text-[9.5px] text-[#e6e6e6]">
          <div className="flex h-[591px] shrink-0">
            <Chart />
            <div className="flex h-[573px] w-[42px] flex-col pt-[17px]">
              {prices.map((price) => (
                <div key={price} className="flex h-[40.930px] shrink-0 items-start gap-[2px]">
                  <div className="mt-[20px] -mb-px h-[1.300px] w-[2px] -translate-y-[0.500px] bg-[#cfcfcf]" />
                  <div className="mt-[13.500px] leading-[14px] tracking-[0.080px]">{price}</div>
                </div>
              ))}
            </div>
          </div>
          <div className="flex h-[17px] shrink-0 pl-[2px]">
            {times.map((time) => (
              <div key={time} className="w-[73.500px] shrink-0 whitespace-nowrap">
                <div className="h-[2px] w-px translate-x-[1px] bg-[#c4c4c4]" />
                <div className="leading-[12px] tracking-[0.050px]">{time}</div>
              </div>
            ))}
          </div>
        </div>
        <div className="h-px shrink-0 bg-[#dedede]" />
        <Tabs />
        <StatusBar />
        <div className="h-[1px] shrink-0 bg-[#161616]" />
      </div>
      <svg className="absolute top-0 left-[540px] h-[26px] w-[200px]" viewBox="0 0 200 26">
        <g fontFamily="'DejaVu Sans',sans-serif" fontWeight="bold" fill="#fff" stroke="#4a4a4a" strokeWidth="2.100" strokeLinejoin="round" paintOrder="stroke">
          <text x="5" y="17.500" fontSize="11" textLength="45" lengthAdjust="spacingAndGlyphs">www.</text>
          <text x="50.500" y="17.500" fontSize="13.500" textLength="103" lengthAdjust="spacingAndGlyphs">BANDICAM</text>
          <text x="154" y="17.500" fontSize="10" textLength="39" lengthAdjust="spacingAndGlyphs">.COM</text>
        </g>
      </svg>
      <svg className="absolute top-[650px] left-[460px] h-[60px] w-[350px] drop-shadow-[4px_5px_1px_rgba(110,110,110,0.7)]" viewBox="0 0 350 60">
        <text x="9" y="45" fontFamily="'Open Sans','Noto Sans',sans-serif" fontSize="39" strokeLinejoin="round" textLength="319" lengthAdjust="spacingAndGlyphs" fill="#fff" stroke="#000" strokeWidth="4.600" paintOrder="stroke">LFX ESTRATÉGIAS</text>
      </svg>
    </div>
  );
}
